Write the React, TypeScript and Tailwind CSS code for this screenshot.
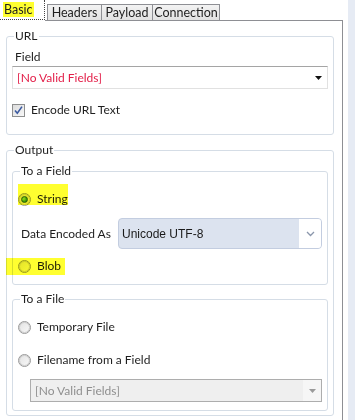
import React from 'react';

const TEXT = "font-['Lato','Liberation_Sans',sans-serif] text-[12px] leading-[16px]";

function Radio({ checked = false }: { checked?: boolean }) {
  return (
    <span className="w-[13px] h-[13px] shrink-0 rounded-full border border-[#9a9a9a] bg-gradient-to-br from-[#d9d9d9] via-[#eeeeee] to-[#fbfbfb] flex items-center justify-center">
      <span className="w-[11px] h-[11px] rounded-full border border-[#c9c9c9] bg-gradient-to-br from-[#e4e4e4] to-[#f7f7f7] flex items-center justify-center">
        {checked && (
          <span className="w-[7px] h-[7px] rounded-full border border-[#2f5d22] bg-[radial-gradient(circle_at_35%_35%,#9be07a,#3c9a25_60%,#1f6b14)]" />
        )}
      </span>
    </span>
  );
}

function Checkbox() {
  return (
    <span className="w-[13px] h-[13px] shrink-0 border border-[#8e8f8f] bg-gradient-to-br from-[#dcdcdc] to-[#f8f8f8] flex items-center justify-center">
      <svg width="11" height="11" viewBox="0 0 11 11">
        <path d="M2 5.5 L4.3 8.3 L9 1.6" fill="none" stroke="#3b5aa0" strokeWidth="1.6" />
      </svg>
    </span>
  );
}

function Group({
  title,
  className,
  children,
}: {
  title: string;
  className?: string;
  children: React.ReactNode;
}) {
  return (
    <fieldset className={`border border-[#d5dde6] rounded-[3px] px-[5px] ${className ?? ''}`}>
      <legend className="ml-[2px] px-[1px] text-[#1e1e1e]">{title}</legend>
      {children}
    </fieldset>
  );
}

function Highlight({ className }: { className: string }) {
  return <span className={`absolute bg-[#ffff30] mix-blend-multiply pointer-events-none ${className}`} />;
}

export default function App() {
  const tabs = [
    { name: 'Headers', w: 'w-[54px]' },
    { name: 'Payload', w: 'w-[51px]' },
    { name: 'Connection', w: 'w-[68px]' },
  ];

  return (
    <div className={`w-[355px] h-[420px] bg-white flex overflow-hidden text-[#1e1e1e] ${TEXT}`}>
      <div className="w-[343px] flex flex-col shrink-0">

        {/* Tab strip */}
        <div className="h-[21px] flex shrink-0">
          <div className="w-[45px] h-[21px] relative">
            <div className="h-[20px] border-r border-b border-dotted border-[#444] flex items-start">
              <span className="ml-[3px] mt-[2px] h-[15px] px-[1px] bg-[#ffff30] flex items-center text-[12.5px]">Basic</span>
            </div>
          </div>
          <div className="flex-1 flex items-end border-b border-[#8e8f94]">
            <div className="ml-[2px] flex">
              {tabs.map((t, i) => (
                <div
                  key={t.name}
                  className={`${t.w} h-[16px] border-t border-l ${i === tabs.length - 1 ? 'border-r' : ''} border-[#8e8f94] bg-gradient-to-b from-[#f3f3f3] to-[#e2e2e2] flex items-center justify-center text-[12.5px]`}
                >
                  {t.name}
                </div>
              ))}
            </div>
          </div>
        </div>

        {/* Panel */}
        <div className="flex-1 border-r border-[#8e8f94] pl-[6px] pr-[8px] flex flex-col">

          {/* URL */}
          <Group title="URL" className="mt-[7px] pt-[5px] pb-[16px]">
            <div className="pl-[3px]">Field</div>
            <div className="mt-[1px] h-[23px] border border-[#e1e1e1] border-t-[#a5a5a5] bg-white flex items-center pl-[4px] pr-[5px]">
              <span className="flex-1 text-[#e3204a]">[No Valid Fields]</span>
              <svg width="7" height="4" viewBox="0 0 7 4">
                <path d="M0 0 H7 L3.5 4 Z" fill="#111" />
              </svg>
            </div>
            <div className="mt-[13px] h-[16px] flex items-center gap-[6px]">
              <Checkbox />
              <span>Encode URL Text</span>
            </div>
          </Group>

          {/* Output */}
          <Group title="Output" className="mt-[7px] pt-[5px] pb-[4px]">

            <Group title="To a Field" className="pt-[12px] pb-[10px] relative">
              <div className="h-[16px] flex items-center gap-[6px] relative">
                <Radio checked />
                <span>String</span>
                <Highlight className="left-0 top-[-7px] w-[50px] h-[21px]" />
              </div>
              <div className="mt-[11px] flex items-center">
                <span className="w-[100px] shrink-0 pl-[3px]">Data Encoded As</span>
                <div className="flex-1 h-[31px] rounded-[4px] border border-[#c3cde0] bg-[#dce3ef] flex overflow-hidden">
                  <span className="flex-1 flex items-center pl-[3px] font-['Liberation_Sans',sans-serif] text-[12px] text-[#1a1a1a]">
                    Unicode UTF-8
                  </span>
                  <span className="w-[22px] bg-white flex items-center justify-center">
                    <svg width="9" height="6" viewBox="0 0 9 6">
                      <path d="M1 1 L4.5 4.5 L8 1" fill="none" stroke="#8a96ab" strokeWidth="1.3" />
                    </svg>
                  </span>
                </div>
              </div>
              <div className="mt-[9px] h-[16px] flex items-center gap-[6px] relative">
                <Radio />
                <span>Blob</span>
                <Highlight className="left-[-12px] top-[0px] w-[59px] h-[17px]" />
              </div>
            </Group>

            <Group title="To a File" className="mt-[6px] pt-[12px] pb-[8px]">
              <div className="h-[16px] flex items-center gap-[6px]">
                <Radio />
                <span>Temporary File</span>
              </div>
              <div className="mt-[17px] h-[16px] flex items-center gap-[6px]">
                <Radio />
                <span>Filename from a Field</span>
              </div>
              <div className="mt-[11px] ml-[12px] h-[23px] border border-[#adadad] bg-[#efefef] flex items-center pl-[4px]">
                <span className="flex-1 text-[#8f8f8f]">[No Valid Fields]</span>
                <span className="w-[18px] self-stretch bg-[#f6f6f6] flex items-center justify-center">
                  <svg width="7" height="4" viewBox="0 0 7 4">
                    <path d="M0 0 H7 L3.5 4 Z" fill="#9a9a9a" />
                  </svg>
                </span>
              </div>
            </Group>
          </Group>
        </div>
      </div>
      <div className="w-[5px] shrink-0 bg-white" />
      <div className="flex-1 bg-[#e6ebf4]" />
    </div>
  );
}
